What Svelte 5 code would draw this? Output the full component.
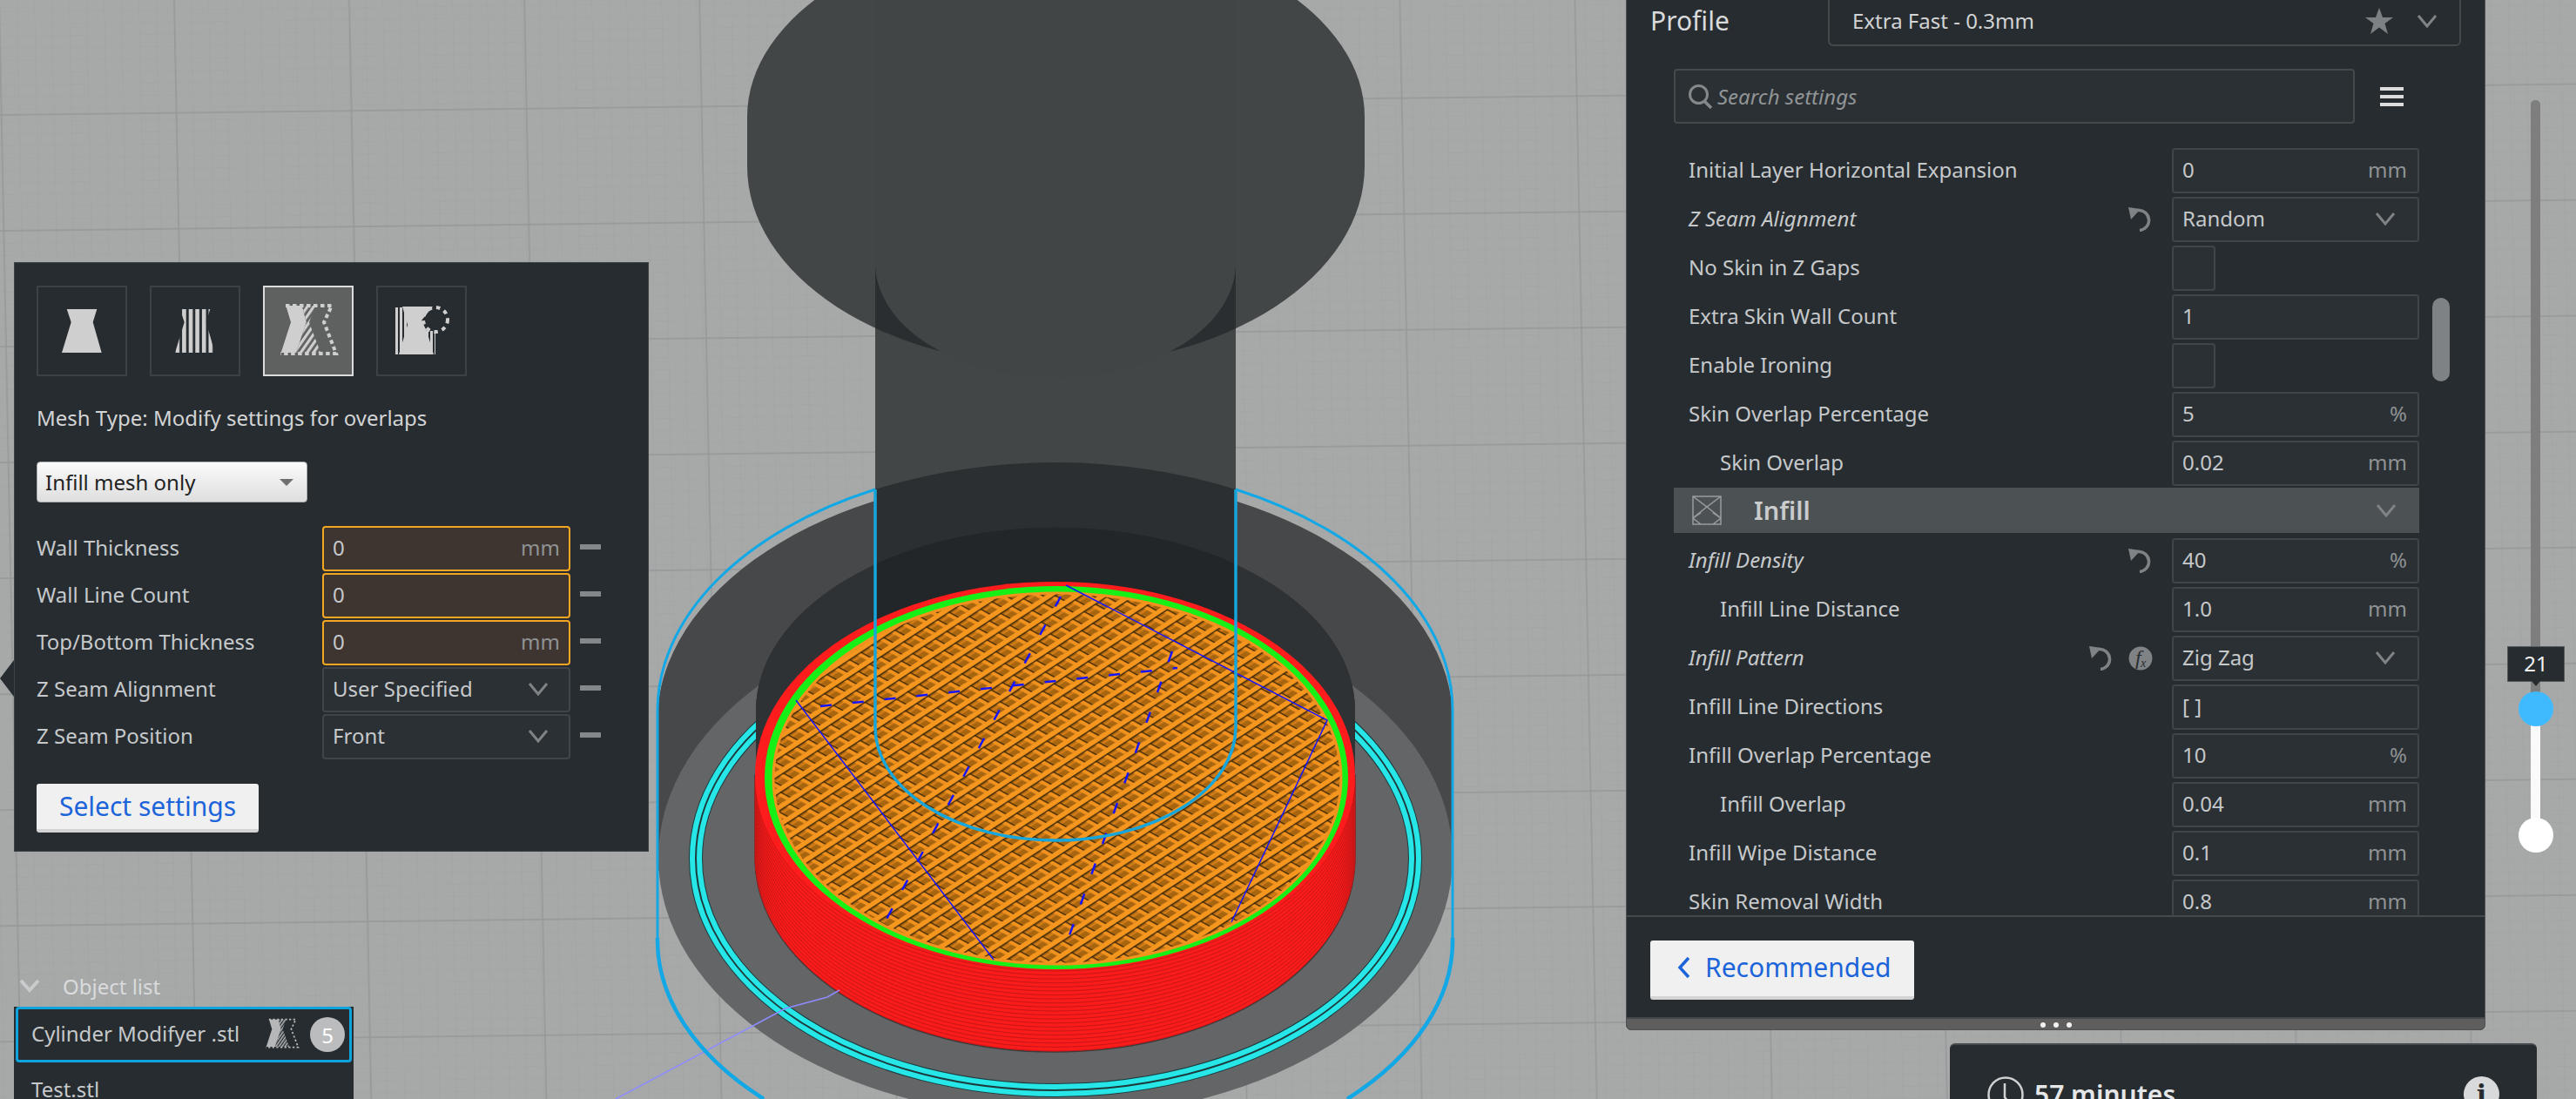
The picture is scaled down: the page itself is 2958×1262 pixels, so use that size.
<script>
    const meshRows = [
        { label: "Wall Thickness", value: "0", unit: "mm", edited: true },
        { label: "Wall Line Count", value: "0", edited: true },
        { label: "Top/Bottom Thickness", value: "0", unit: "mm", edited: true },
        { label: "Z Seam Alignment", value: "User Specified", select: true },
        { label: "Z Seam Position", value: "Front", select: true }
    ];

    const settings = [
        { label: "Initial Layer Horizontal Expansion", value: "0", unit: "mm" },
        { label: "Z Seam Alignment", value: "Random", select: true, changed: true },
        { label: "No Skin in Z Gaps", check: true },
        { label: "Extra Skin Wall Count", value: "1" },
        { label: "Enable Ironing", check: true },
        { label: "Skin Overlap Percentage", value: "5", unit: "%" },
        { label: "Skin Overlap", value: "0.02", unit: "mm", sub: true },
        { header: "Infill" },
        { label: "Infill Density", value: "40", unit: "%", changed: true },
        { label: "Infill Line Distance", value: "1.0", unit: "mm", sub: true },
        { label: "Infill Pattern", value: "Zig Zag", select: true, changed: true, fx: true },
        { label: "Infill Line Directions", value: "[ ]" },
        { label: "Infill Overlap Percentage", value: "10", unit: "%" },
        { label: "Infill Overlap", value: "0.04", unit: "mm", sub: true },
        { label: "Infill Wipe Distance", value: "0.1", unit: "mm" },
        { label: "Skin Removal Width", value: "0.8", unit: "mm" }
    ];

    // printed layers on the side of the cylinder
    const layers = Array.from({ length: 21 }, (_, i) => 893 + i * 4.6);
</script>

<div class="app">
    <svg class="scene" width="2958" height="1262" viewBox="0 0 2958 1262">
        <defs>
            <pattern id="fine" width="20" height="14" patternUnits="userSpaceOnUse" patternTransform="matrix(1 -0.012 0.02 1 0 0)">
                <path d="M20 0V14M0 14H20" stroke="#a0a2a3" stroke-width="1" fill="none" />
            </pattern>
            <pattern id="coarse" width="201" height="133" patternUnits="userSpaceOnUse" patternTransform="matrix(1 -0.012 0.02 1 0 0)">
                <path d="M200 0V133M0 132H201" stroke="#959798" stroke-width="1.5" fill="none" />
            </pattern>
            <pattern id="lattice" width="20" height="40" patternUnits="userSpaceOnUse" patternTransform="matrix(0.65 -0.425 0.835 0.46 0 0)">
                <rect width="20" height="40" fill="#a8650f" />
                <rect x="0" y="10" width="20" height="3" fill="#d27c18" />
                <rect x="0" y="30" width="20" height="3" fill="#d27c18" />
                <rect x="8" y="0" width="2" height="20" fill="#3a2608" />
                <rect x="18" y="20" width="2" height="20" fill="#3a2608" />
                <rect x="2" y="0" width="5.800" height="20" fill="#f2921e" />
                <rect x="12" y="20" width="5.800" height="20" fill="#f2921e" />
                <rect x="0" y="0" width="20" height="6.500" fill="#f5961f" />
                <rect x="0" y="20" width="20" height="6.500" fill="#f5961f" />
                <rect x="0" y="6.500" width="20" height="1.600" fill="#3a2608" />
                <rect x="0" y="26.500" width="20" height="1.600" fill="#3a2608" />
            </pattern>
            <clipPath id="head-clip">
                <path d="M858 134A354.500 215 0 0 1 1567 134V191A354.500 229 0 0 1 858 191Z" />
            </clipPath>
        </defs>

        <rect width="2958" height="1262" fill="#a7a9a9" />
        <rect width="2958" height="1262" fill="url(#fine)" />
        <rect width="2958" height="1262" fill="url(#coarse)" />

        <!-- print head and gantry shadow -->
        <path d="M1005 300H1419V660H1005Z" fill="#434647" />
        <path d="M858 134A354.500 215 0 0 1 1567 134V191A354.500 229 0 0 1 858 191Z" fill="#434647" />
        <rect x="1005" y="300" width="414" height="140" fill="#2b2e30" clip-path="url(#head-clip)" />
        <ellipse cx="1212" cy="302" rx="207" ry="132" fill="#424546" />
        <rect x="1005" y="0" width="414" height="302" fill="#424546" />

        <!-- disallowed areas -->
        <path d="M755 1000V816A457 285 0 0 1 1668 816V1000Z" fill="#464849" />
        <path d="M1005 562A457 285 0 0 1 1419 562V800H1005Z" fill="#2c2f31" />
        <ellipse cx="1212" cy="985" rx="456" ry="298" fill="#646566" />
        <path d="M868 816A344 210 0 0 1 1556 816V1000H868Z" fill="#2e3234" />
        <path d="M1005 648A344 210 0 0 1 1419 648V800H1005Z" fill="#232628" />

        <!-- skirt -->
        <ellipse cx="1212" cy="986" rx="413" ry="266" fill="none" stroke="#1d3b3d" stroke-width="16" />
        <ellipse cx="1212" cy="986" rx="417" ry="270" fill="none" stroke="#26e6e8" stroke-width="6" />
        <ellipse cx="1212" cy="986" rx="409" ry="262" fill="none" stroke="#26e6e8" stroke-width="6" />
        <path d="M868 816A344 210 0 0 1 1556 816V900H868Z" fill="#2e3234" />
        <path d="M1005 648A344 210 0 0 1 1419 648V800H1005Z" fill="#232628" />

        <!-- printed part -->
        <path d="M867 890V986A344.500 222 0 0 0 1556 986V890Z" fill="#fa1b1b" stroke="#3a3c3d" stroke-width="1.500" />
        {#each layers as y}
            <path d="M867 {y}A344.500 222 0 0 0 1556 {y}" fill="none" stroke="#c81616" stroke-width="1" />
        {/each}
        <ellipse cx="1211.500" cy="890" rx="344.500" ry="222" fill="#ff1c1c" />
        <ellipse cx="1213" cy="893" rx="335" ry="220" fill="#17f017" />
        <ellipse cx="1214" cy="894" rx="326" ry="213" fill="url(#lattice)" stroke="#f2921e" stroke-width="3" />

        <!-- travel moves -->
        <path d="M1224 672L1524 827L1414 1059M914 804L1141 1102" fill="none" stroke="#1414ff" stroke-width="1.500" />
        <path d="M1218 685L1016 1059M1346 748L1224 1085M942 811L1352 767" fill="none" stroke="#1414ff" stroke-width="2.500" stroke-dasharray="13 24" />
        <path d="M707 1262L902 1158L950 1145L964 1137" fill="none" stroke="#8f8cff" stroke-width="1.500" />

        <!-- outlines -->
        <path d="M1005 562A457 285 0 0 0 755 816V1077" fill="none" stroke="#12a8e6" stroke-width="3" />
        <path d="M1419 562A457 285 0 0 1 1668 816V1077" fill="none" stroke="#12a8e6" stroke-width="3" />
        <path d="M755 1077A457 268 0 0 0 877 1262M1668 1077A457 268 0 0 1 1547 1262" fill="none" stroke="#12a8e6" stroke-width="4.500" />
        <path d="M1005 562V835A207 130 0 0 0 1419 835V562" fill="none" stroke="#16a6dc" stroke-width="3.500" />
    </svg>

    <div class="mesh-panel">
        <div class="mesh-types">
            <div class="mesh-btn">
                <svg width="100" height="100" viewBox="2 2 100 100"><polygon points="34.700,27 69.300,27 64.700,42 74.700,77 29,77 39.700,42" fill="#cfcfcf" /></svg>
            </div>
            <div class="mesh-btn">
                <svg width="100" height="100" viewBox="2 2 100 100">
                    <defs>
                        <pattern id="stripes" width="7.600" height="10" patternUnits="userSpaceOnUse" x="29.500"><rect width="4.600" height="10" fill="#cfcfcf" /></pattern>
                    </defs>
                    <polygon points="34.700,27 69.300,27 64.700,42 74.700,77 29,77 39.700,42" fill="url(#stripes)" />
                </svg>
            </div>
            <div class="mesh-btn active">
                <svg width="100" height="100" viewBox="2 2 100 100">
                    <defs>
                        <pattern id="hatch" width="6" height="6" patternUnits="userSpaceOnUse" patternTransform="rotate(35)"><rect width="3.200" height="6" fill="#cfcfcf" /></pattern>
                    </defs>
                    <polygon points="26.300,23 44.700,23 49.700,42 38,77 20.700,77 32,42" fill="#cfcfcf" />
                    <polygon points="44.700,23 60,23 53,42 66,77 38,77 49.700,42" fill="url(#hatch)" />
                    <path d="M26 23H79L70 42L84 78H20" fill="none" stroke="#cfcfcf" stroke-width="4" stroke-dasharray="4.500 3.500" />
                </svg>
            </div>
            <div class="mesh-btn">
                <svg width="100" height="100" viewBox="2 2 100 100">
                    <defs>
                        <pattern id="stripes4" width="5" height="10" patternUnits="userSpaceOnUse" x="22"><rect width="3" height="10" fill="#cfcfcf" /></pattern>
                    </defs>
                    <rect x="22" y="25" width="18" height="54" fill="url(#stripes4)" />
                    <rect x="56" y="52" width="12" height="27" fill="url(#stripes4)" />
                    <polygon points="22,24 65,24 52,40 58,52 66,79 26,79 36,45 30,24" fill="#cfcfcf" />
                    <circle cx="68" cy="39" r="14" fill="none" stroke="#cfcfcf" stroke-width="4" stroke-dasharray="4.500 5" />
                </svg>
            </div>
        </div>
        <div class="mesh-type-label">Mesh Type: Modify settings for overlaps</div>
        <div class="combo">
            <span>Infill mesh only</span>
            <svg width="16" height="10" viewBox="0 0 16 10"><polygon points="0,1 16,1 8,9" fill="#707070" /></svg>
        </div>
        <div class="mesh-rows">
            {#each meshRows as row}
                <div class="mesh-row">
                    <span class="mesh-label">{row.label}</span>
                    <div class="field" class:edited={row.edited}>
                        <span>{row.value}</span>
                        {#if row.unit}<span class="unit">{row.unit}</span>{/if}
                        {#if row.select}
                            <svg class="chev" width="24" height="16" viewBox="0 0 24 16"><path d="M2 2L12 14L22 2" fill="none" stroke="#808385" stroke-width="3" /></svg>
                        {/if}
                    </div>
                    <div class="minus"></div>
                </div>
            {/each}
        </div>
        <div class="btn select-btn">Select settings</div>
    </div>

    <div class="objects">
        <div class="objects-head">
            <svg width="24" height="16" viewBox="0 0 24 16"><path d="M2 2L12 13L22 2" fill="none" stroke="#c9cbcc" stroke-width="4" /></svg>
            <span>Object list</span>
        </div>
        <div class="objects-list">
            <div class="object selected">
                <span class="object-name">Cylinder Modifyer .stl</span>
                <svg width="41" height="36" viewBox="18 20 70 62">
                    <defs>
                        <pattern id="hatch-small" width="5" height="5" patternUnits="userSpaceOnUse" patternTransform="rotate(35)"><rect width="2.600" height="5" fill="#b5b7b8" /></pattern>
                    </defs>
                    <polygon points="26.300,23 44.700,23 49.700,42 38,77 20.700,77 32,42" fill="#b5b7b8" />
                    <polygon points="44.700,23 60,23 53,42 66,77 38,77 49.700,42" fill="url(#hatch-small)" />
                    <path d="M26 23H79L70 42L84 78H20" fill="none" stroke="#b5b7b8" stroke-width="3" stroke-dasharray="4 4" />
                </svg>
                <span class="badge">5</span>
            </div>
            <div class="object">
                <span class="object-name">Test.stl</span>
            </div>
        </div>
    </div>

    <div class="settings-panel">
        <div class="profile-row">
            <span class="profile-label">Profile</span>
            <div class="profile-box">
                <span class="profile-name">Extra Fast - 0.3mm</span>
                <svg class="star" width="32" height="30" viewBox="0 0 32 30"><polygon points="16,0 20,11 32,11 22.500,18 26,30 16,22.500 6,30 9.500,18 0,11 12,11" fill="#7e8183" /></svg>
                <svg width="24" height="16" viewBox="0 0 24 16"><path d="M2 2L12 14L22 2" fill="none" stroke="#808385" stroke-width="3" /></svg>
            </div>
        </div>
        <div class="search-row">
            <div class="search-box">
                <svg width="28" height="28" viewBox="0 0 28 28"><circle cx="12.500" cy="11.500" r="10" fill="none" stroke="#85888a" stroke-width="3" /><path d="M19 19L27 27" stroke="#85888a" stroke-width="3.500" /></svg>
                <span>Search settings</span>
            </div>
            <div class="burger"><i></i><i></i><i></i></div>
        </div>
        <div class="settings">
            {#each settings as s}
                {#if s.header}
                    <div class="section">
                        <svg width="34" height="34" viewBox="0 0 34 34"><path d="M1 1H33V33H1ZM1 1L17 13L33 1M17 13L33 26L24 33M17 13L1 26L10 33M1 26L10 20M33 26L24 20" fill="none" stroke="#999c9e" stroke-width="1.500" /></svg>
                        <span class="section-name">{s.header}</span>
                        <svg width="24" height="16" viewBox="0 0 24 16"><path d="M2 2L12 14L22 2" fill="none" stroke="#808385" stroke-width="3" /></svg>
                    </div>
                {:else}
                    <div class="setting">
                        <span class="setting-label" class:sub={s.sub} class:changed={s.changed}>{s.label}</span>
                        <div class="setting-icons">
                            {#if s.changed}
                                <svg width="28" height="28" viewBox="0 0 28 28"><path d="M11 3.500A11.500 11.500 0 0 1 13 26.500" fill="none" stroke="#808385" stroke-width="3.500" /><polygon points="0,0 14,2 3,14" fill="#808385" /></svg>
                            {/if}
                            {#if s.fx}
                                <svg width="28" height="28" viewBox="0 0 28 28"><circle cx="14" cy="14" r="13.500" fill="#808385" /><text x="8" y="21" class="fx">f</text><text x="14" y="24" class="fx small">x</text></svg>
                            {/if}
                        </div>
                        {#if s.check}
                            <div class="field check"></div>
                        {:else}
                            <div class="field wide">
                                <span>{s.value}</span>
                                {#if s.unit}<span class="unit">{s.unit}</span>{/if}
                                {#if s.select}
                                    <svg class="chev" width="24" height="16" viewBox="0 0 24 16"><path d="M2 2L12 14L22 2" fill="none" stroke="#808385" stroke-width="3" /></svg>
                                {/if}
                            </div>
                        {/if}
                    </div>
                {/if}
            {/each}
        </div>
        <div class="scrollbar"></div>
        <div class="footer">
            <div class="btn recommended">
                <svg width="16" height="26" viewBox="0 0 16 26"><path d="M13 2L3 13L13 24" fill="none" stroke="#1c64d9" stroke-width="3.500" /></svg>
                <span>Recommended</span>
            </div>
        </div>
        <div class="grip"><i></i><i></i><i></i></div>
    </div>

    <div class="layer-slider">
        <div class="track-top"></div>
        <div class="track-low"></div>
        <div class="thumb blue"></div>
        <div class="thumb white"></div>
        <div class="layer-tip">21</div>
    </div>

    <div class="time-panel">
        <svg width="42" height="42" viewBox="0 0 42 42"><circle cx="21" cy="21" r="19.500" fill="none" stroke="#cfd1d2" stroke-width="2.500" /><path d="M20 8V24L28 34" fill="none" stroke="#cfd1d2" stroke-width="2.500" /></svg>
        <span class="time">57 minutes</span>
        <span class="info">i</span>
    </div>
</div>

<style>
    :global(body) {
        margin: 0;
        background: #a7a9a9;
    }
    .app {
        position: relative;
        width: 2958px;
        height: 1262px;
        overflow: hidden;
        font-family: "Noto Sans", sans-serif;
        font-size: 24px;
        color: #c6c9cb;
    }
    .scene {
        position: absolute;
        top: 0;
        left: 0;
    }

    /* per model settings */
    .mesh-panel {
        position: absolute;
        left: 16px;
        top: 301px;
        width: 729px;
        height: 677px;
        box-sizing: border-box;
        padding: 26px 25px 0;
        background: #272c30;
        border: 1px solid #3d4245;
    }
    .mesh-panel::before {
        content: "";
        position: absolute;
        left: -17px;
        top: 456px;
        border-top: 21px solid transparent;
        border-bottom: 21px solid transparent;
        border-right: 16px solid #272c30;
    }
    .mesh-types {
        display: flex;
        gap: 26px;
    }
    .mesh-btn {
        width: 100px;
        height: 100px;
        border: 2px solid #3b4145;
    }
    .mesh-btn svg {
        display: block;
    }
    .mesh-btn.active {
        background: #5f6060;
        border-color: #dcdcdc;
    }
    .mesh-type-label {
        margin-top: 31px;
        height: 34px;
        line-height: 34px;
        color: #d2d4d5;
    }
    .combo {
        display: flex;
        align-items: center;
        justify-content: space-between;
        box-sizing: border-box;
        width: 311px;
        height: 47px;
        margin-top: 33px;
        padding: 0 15px 0 9px;
        background: linear-gradient(#fbfbfb, #dedede);
        border: 1px solid #aaaaaa;
        border-radius: 4px;
        color: #222222;
    }
    .mesh-rows {
        display: flex;
        flex-direction: column;
        gap: 2px;
        margin-top: 27px;
    }
    .mesh-row {
        display: flex;
        align-items: center;
        height: 52px;
    }
    .mesh-label {
        width: 328px;
        padding-bottom: 3px;
    }
    .field {
        display: flex;
        align-items: center;
        justify-content: space-between;
        box-sizing: border-box;
        width: 285px;
        height: 100%;
        padding: 0 10px 3px;
        background: #2b3034;
        border: 2px solid #404549;
        border-radius: 4px;
    }
    .field.edited {
        background: #3e3430;
        border-color: #f3a622;
    }
    .unit {
        color: #8f9294;
    }
    .chev {
        margin-right: 13px;
    }
    .minus {
        width: 24px;
        height: 6px;
        margin-left: 11px;
        margin-bottom: 4px;
        background: #85888a;
    }
    .btn {
        display: flex;
        align-items: center;
        box-sizing: border-box;
        background: #f0f0f0;
        border-bottom: 4px solid #d4d4d4;
        border-radius: 3px;
        color: #1c64d9;
        font-size: 30px;
    }
    .select-btn {
        justify-content: center;
        width: 255px;
        height: 56px;
        margin-top: 28px;
        padding-bottom: 2px;
    }

    /* object list */
    .objects {
        position: absolute;
        left: 16px;
        top: 1112px;
        width: 390px;
    }
    .objects-head {
        display: flex;
        align-items: center;
        gap: 26px;
        height: 44px;
        padding: 0 0 4px 6px;
        box-sizing: border-box;
        color: #d9dbdc;
    }
    .objects-list {
        height: 110px;
        background: #272c30;
    }
    .object {
        display: flex;
        align-items: center;
        box-sizing: border-box;
        height: 64px;
        margin: 0 2px;
        padding: 0 5px 3px 15px;
        border: 3px solid transparent;
    }
    .object.selected {
        border-color: #0ea5df;
        border-radius: 4px;
    }
    .object-name {
        flex: 1;
    }
    .badge {
        display: flex;
        align-items: center;
        justify-content: center;
        width: 40px;
        height: 40px;
        margin: 3px 0 0 11px;
        border-radius: 50%;
        background: #bbbcbd;
        color: #ffffff;
    }

    /* settings panel */
    .settings-panel {
        position: absolute;
        left: 1867px;
        top: -20px;
        width: 987px;
        height: 1203px;
        box-sizing: border-box;
        background: #272c30;
        border: 1px solid #4d5154;
        border-radius: 0 0 6px 6px;
        overflow: hidden;
    }
    .profile-row {
        display: flex;
        align-items: center;
        height: 72px;
        padding-left: 27px;
    }
    .profile-label {
        width: 204px;
        font-size: 30px;
        color: #d8dadb;
        padding-top: 13px;
    }
    .profile-box {
        display: flex;
        align-items: center;
        box-sizing: border-box;
        width: 727px;
        height: 100%;
        padding: 13px 25px 0 26px;
        border: 2px solid #44494c;
        border-radius: 6px;
    }
    .profile-name {
        flex: 1;
        color: #d2d4d5;
    }
    .star {
        margin-right: 27px;
    }
    .search-row {
        display: flex;
        align-items: center;
        margin: 26px 0 0 54px;
    }
    .search-box {
        display: flex;
        align-items: center;
        gap: 6px;
        box-sizing: border-box;
        width: 782px;
        height: 63px;
        padding-left: 14px;
        background: #2b3034;
        border: 2px solid #44494c;
        border-radius: 4px;
        font-style: italic;
        color: #919496;
    }
    .burger {
        display: flex;
        flex-direction: column;
        gap: 5px;
        width: 27px;
        margin-left: 29px;
    }
    .burger i {
        height: 4px;
        background: #dcdcdc;
    }
    .settings {
        display: flex;
        flex-direction: column;
        gap: 4px;
        width: 856px;
        height: 881px;
        margin: 28px 0 0 54px;
        overflow: hidden;
    }
    .setting {
        display: flex;
        flex: none;
        align-items: center;
        height: 52px;
    }
    .setting-label {
        flex: 1;
        padding: 0 0 3px 17px;
    }
    .setting-label.sub {
        padding-left: 53px;
    }
    .setting-label.changed {
        font-style: italic;
    }
    .setting-icons {
        display: flex;
        gap: 17px;
        margin-right: 22px;
    }
    .fx {
        font-family: "Liberation Serif", serif;
        font-style: italic;
        font-size: 24px;
        fill: #2a2e31;
    }
    .fx.small {
        font-size: 14px;
    }
    .field.wide {
        width: 284px;
        padding: 0 12px 3px 10px;
    }
    .field.check {
        width: 50px;
        margin-right: 234px;
    }
    .section {
        display: flex;
        flex: none;
        align-items: center;
        height: 52px;
        margin: -2px 0 2px;
        padding: 0 26px 0 21px;
        background: #4c5154;
    }
    .section-name {
        flex: 1;
        margin-left: 37px;
        padding-bottom: 2px;
        font-size: 29px;
        font-weight: 600;
        color: #c9cbcc;
    }
    .scrollbar {
        position: absolute;
        left: 925px;
        top: 361px;
        width: 20px;
        height: 96px;
        border-radius: 10px;
        background: #7e8285;
    }
    .footer {
        box-sizing: border-box;
        height: 117px;
        padding: 27px 0 0 27px;
        border-top: 2px solid #44494c;
    }
    .recommended {
        gap: 16px;
        width: 303px;
        height: 68px;
        padding: 0 0 3px 31px;
        font-size: 30px;
    }
    .grip {
        display: flex;
        align-items: center;
        justify-content: center;
        gap: 9px;
        height: 14px;
        background: #5e5e5e;
        border-top: 2px solid #44484b;
    }
    .grip i {
        width: 6px;
        height: 6px;
        border-radius: 50%;
        background: #f2f2f2;
    }

    /* layer slider */
    .layer-slider {
        position: absolute;
        left: 2879px;
        top: 115px;
        width: 66px;
        height: 864px;
    }
    .track-top {
        position: absolute;
        left: 27px;
        top: 0;
        width: 11px;
        height: 690px;
        border-radius: 5px 5px 0 0;
        background: #7e7e7e;
    }
    .track-low {
        position: absolute;
        left: 27px;
        top: 690px;
        width: 11px;
        height: 140px;
        background: #fafafa;
    }
    .thumb {
        position: absolute;
        left: 13px;
        width: 40px;
        height: 40px;
        border-radius: 50%;
    }
    .thumb.blue {
        top: 679px;
        background: #3fbaff;
    }
    .thumb.white {
        top: 824px;
        background: #ffffff;
    }
    .layer-tip {
        position: absolute;
        left: 0;
        top: 627px;
        box-sizing: border-box;
        width: 66px;
        height: 41px;
        line-height: 37px;
        text-align: center;
        background: #272c30;
        border: 1px solid #555a5d;
        color: #f2f2f2;
    }
    .layer-tip::after {
        content: "";
        position: absolute;
        left: 27px;
        top: 39px;
        border-left: 5px solid transparent;
        border-right: 5px solid transparent;
        border-top: 6px solid #272c30;
    }

    /* print time */
    .time-panel {
        position: absolute;
        left: 2239px;
        top: 1198px;
        display: flex;
        align-items: flex-start;
        box-sizing: border-box;
        width: 674px;
        height: 80px;
        padding: 36px 43px 0 43px;
        background: #272c30;
        border-top: 2px solid #44494c;
        border-radius: 6px 6px 0 0;
    }
    .time {
        flex: 1;
        margin: 0 0 0 12px;
        font-size: 30px;
        font-weight: 600;
        line-height: 42px;
        color: #e4e6e7;
    }
    .info {
        display: flex;
        align-items: center;
        justify-content: center;
        width: 41px;
        height: 41px;
        border-radius: 50%;
        background: #d8d9da;
        color: #272c30;
        font-family: "DejaVu Serif", serif;
        font-weight: 700;
        font-size: 30px;
    }
</style>
